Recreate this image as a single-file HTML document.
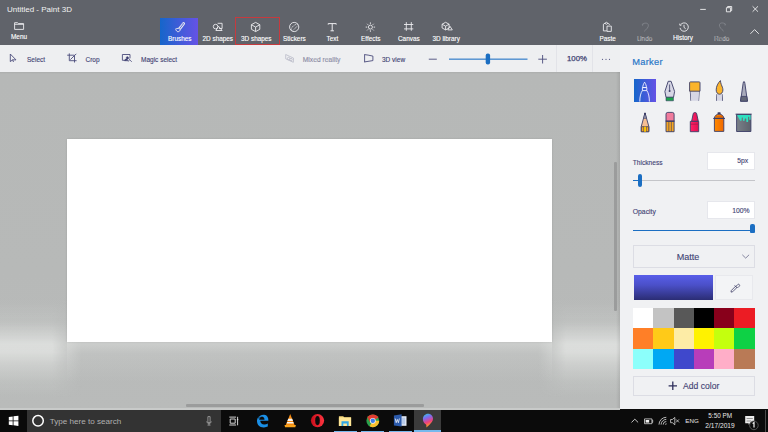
<!DOCTYPE html>
<html><head><meta charset="utf-8">
<style>
*{margin:0;padding:0;box-sizing:border-box}
html,body{width:768px;height:432px;overflow:hidden;background:#b8bab9;font-family:"Liberation Sans",sans-serif}
.a{position:absolute}
.t{position:absolute;white-space:nowrap;line-height:1}
#top{left:0;top:0;width:768px;height:45px;background:#60636a}
#bar{left:0;top:45px;width:620px;height:27px;background:#eeeff1}
#work{left:0;top:72px;width:620px;height:337px;background:linear-gradient(#b6b8b7 0px,#b7b9b8 200px,#b9bbba 337px)}
#band{left:0;top:298px;width:620px;height:100px;background:linear-gradient(rgba(222,224,222,0) 0px,rgba(222,224,222,.2) 24px,rgba(222,224,222,.65) 38px,rgba(222,224,222,.92) 46px,rgba(222,224,222,.9) 54px,rgba(222,224,222,.5) 68px,rgba(222,224,222,.18) 84px,rgba(222,224,222,0) 100px);-webkit-mask-image:linear-gradient(90deg,#000 0,#000 52px,transparent 82px,transparent 538px,#000 566px,#000 620px)}
#under{left:67px;top:342px;width:485px;height:40px;background:linear-gradient(rgba(222,224,222,.55),rgba(222,224,222,.2) 12px,rgba(222,224,222,0) 40px)}
#canvas{left:67px;top:139px;width:485px;height:203px;background:#fff;box-shadow:0 0 2px rgba(0,0,0,.12)}
#panel{left:620px;top:45px;width:148px;height:364px;background:#f0f1f3}
#task{left:0;top:409px;width:768px;height:23px;background:#0b0b0b}
.lbl{color:#fff;font-size:6.4px;-webkit-text-stroke:.12px #fff}
.dk{color:#424373;font-size:6.5px;-webkit-text-stroke:.12px #424373}
svg{position:absolute;overflow:visible}
</style></head><body>
<div id="top" class="a"></div>
<div class="t" style="left:7px;top:6px;font-size:8px;color:#f2f2f2">Untitled - Paint 3D</div>
<div class="t lbl" style="left:11px;top:34px">Menu</div>

<div class="a" style="left:160px;top:18px;width:38px;height:27px;background:linear-gradient(90deg,#1566ca,#3f5cd8 50%,#6552e6)"></div>
<div class="a" style="left:235px;top:17px;width:45px;height:28px;border:1px solid #c63a3e"></div>

<div class="t lbl" style="left:168px;top:36px">Brushes</div>
<div class="t lbl" style="left:202.5px;top:36px">2D shapes</div>
<div class="t lbl" style="left:241px;top:36px">3D shapes</div>
<div class="t lbl" style="left:283px;top:36px">Stickers</div>
<div class="t lbl" style="left:326.5px;top:36px">Text</div>
<div class="t lbl" style="left:361px;top:36px">Effects</div>
<div class="t lbl" style="left:398px;top:36px">Canvas</div>
<div class="t lbl" style="left:432.5px;top:36px">3D library</div>
<div class="t lbl" style="left:599.5px;top:36px">Paste</div>
<div class="t lbl" style="left:637px;top:36px;color:#7c7e83">Undo</div>
<div class="t lbl" style="left:673px;top:35.2px">History</div>
<div class="t lbl" style="left:714px;top:36px;color:#7c7e83">Redo</div>

<div id="bar" class="a"></div>
<div class="t dk" style="left:27px;top:56.6px">Select</div>
<div class="t dk" style="left:85.5px;top:56.6px">Crop</div>
<div class="t dk" style="left:141px;top:56.6px">Magic select</div>
<div class="t dk" style="left:302.8px;top:56.6px;font-size:6.7px;color:#a9aab8">Mixed reality</div>
<div class="t dk" style="left:382px;top:56.6px">3D view</div>
<div class="t dk" style="left:567px;top:55.3px;font-size:7.8px;-webkit-text-stroke:.25px #424373">100%</div>
<div class="a" style="left:556px;top:45px;width:1px;height:27px;background:#e2e3e8"></div>
<div class="a" style="left:592px;top:45px;width:1px;height:27px;background:#e2e3e8"></div>

<div id="work" class="a"></div>
<div id="band" class="a"></div>
<div id="under" class="a"></div>
<div id="canvas" class="a"></div>
<div class="a" style="left:0;top:72px;width:620px;height:2px;background:linear-gradient(rgba(0,0,0,.06),rgba(0,0,0,0))"></div>
<div class="a" style="left:616px;top:72px;width:4px;height:337px;background:linear-gradient(90deg,rgba(0,0,0,0),rgba(0,0,0,.09))"></div>
<div class="a" style="left:614px;top:162px;width:3px;height:149px;background:#9b9c9c;border-radius:1px"></div>
<div class="a" style="left:186px;top:404px;width:238px;height:3px;background:#9b9c9c;border-radius:1px"></div>

<div id="panel" class="a"></div>
<div class="t" style="left:632.2px;top:58px;font-size:9.3px;letter-spacing:.3px;color:#2b78c8;-webkit-text-stroke:.2px #2b78c8">Marker</div>
<div class="t dk" style="left:632.8px;top:159.6px;font-size:6.6px">Thickness</div>
<div class="t dk" style="left:632.8px;top:209.2px;font-size:6.8px">Opacity</div>

<div class="a" style="left:634px;top:79px;width:22px;height:23px;background:linear-gradient(90deg,#1566ca,#3f5cd8 50%,#6552e6)"></div>
<div class="a" style="left:706.8px;top:152px;width:48px;height:17.5px;background:#fff;border:1px solid #e6e7ec"></div>
<div class="t dk" style="left:737.3px;top:158px;font-size:6.8px">5px</div>
<div class="a" style="left:633px;top:180.2px;width:121.5px;height:1px;background:#c4c5c9"></div>
<div class="a" style="left:633px;top:180.2px;width:6px;height:1px;background:#1b6ec2"></div>
<div class="a" style="left:637.7px;top:174.2px;width:4.4px;height:13px;background:#1b6ec2;border-radius:2px"></div>
<div class="a" style="left:706.8px;top:201.4px;width:48px;height:17.8px;background:#fff;border:1px solid #e6e7ec"></div>
<div class="t dk" style="left:732.2px;top:207.5px;font-size:6.8px">100%</div>
<div class="a" style="left:633px;top:230px;width:121.5px;height:1px;background:#1b6ec2"></div>
<div class="a" style="left:749.5px;top:224px;width:5px;height:9px;background:#1b6ec2;border-radius:2px 2px 1px 1px"></div>
<div class="a" style="left:633px;top:245px;width:122px;height:23px;border:1px solid #dcdde4;background:#f0f1f3"></div>
<div class="t dk" style="left:676.8px;top:253px;font-size:9px">Matte</div>
<div class="a" style="left:634px;top:275.3px;width:79px;height:25px;background:linear-gradient(#585ee9,#4b50c9 40%,#2b2d74)"></div>
<div class="a" style="left:715.3px;top:275.3px;width:38px;height:25px;background:#f3f4f6;border:1px solid #e8e9ed"></div>
<div class="a" style="left:633px;top:308px;width:121.5px;height:61px;display:grid;grid-template-columns:repeat(6,1fr);grid-template-rows:repeat(3,1fr)">
<i style="background:#fff"></i><i style="background:#c3c3c3"></i><i style="background:#585858"></i><i style="background:#000"></i><i style="background:#88001b"></i><i style="background:#ec1c24"></i>
<i style="background:#ff7f27"></i><i style="background:#ffca18"></i><i style="background:#fdeca6"></i><i style="background:#fff200"></i><i style="background:#c4ff0e"></i><i style="background:#0ed145"></i>
<i style="background:#8cfffb"></i><i style="background:#00a8f3"></i><i style="background:#3f48cc"></i><i style="background:#b83dba"></i><i style="background:#ffaec8"></i><i style="background:#b97a56"></i>
</div>
<div class="a" style="left:633px;top:376px;width:121.5px;height:19.5px;border:1px solid #dcdde4;background:#f0f1f3"></div>
<div class="t dk" style="left:683px;top:381.5px;font-size:8.6px">Add color</div>

<svg width="768" height="432" viewBox="0 0 768 432" style="left:0;top:0">
<g fill="none" stroke="#ececef" stroke-width="0.9" stroke-linejoin="round">
<!-- menu folder -->
<path d="M14.6 22.7h3l.9.9h5.1v5.8h-9z M14.6 24.3h9"/>
<!-- brush -->
<path d="M178.7 28.3l4.3-5.4a.9 .9 0 0 1 1.4 1.1l-4.1 5.3" stroke-width="1.1"/>
<path d="M180.6 25.6l.7-.9M181.8 24.1l.7-.9" stroke="#5a5fd8" stroke-width=".6"/>
<path d="M175.6 28.8c.9 0 1.6 0 2.3-.5c1.1-.1 2.3.6 2.2 1.6c-.1 1-.9 1.7-1.9 1.8c-1 .1-1.6-.6-1.8-1.3c-.4 0-.8-.3-.8-.9" stroke-width="1"/>
<!-- 2D shapes -->
<circle cx="215.6" cy="26.6" r="2.3"/>
<path d="M217.6 23.3h4.5v5.2h-3"/>
<path d="M218.5 26.2l-2.6 4.3h6.2z"/>
<!-- cube -->
<path d="M255.6 22.4l4.2 2.3v4.6l-4.2 2.3l-4.2-2.3v-4.6z M251.4 24.7l4.2 2.4l4.2-2.4 M255.6 27.1v4.5"/>
<!-- stickers -->
<circle cx="294.2" cy="27" r="4.6"/>
<path d="M291 30.2c.5-3 2.5-5.5 6.8-6.2M292.5 30.8l5.5-5.3" stroke-dasharray="1 .8"/>
<!-- T -->
<path d="M328.2 24.6v-1h8v1M332.2 23.6v7.2M330.5 30.8h3.4" stroke-width="1"/>
<!-- sun -->
<circle cx="370.4" cy="27.1" r="2"/>
<path d="M370.4 22.4v1.5M370.4 30.3v1.5M365.7 27.1h1.5M373.6 27.1h1.5M367.1 23.8l1 1M372.7 29.4l1 1M373.7 23.8l-1 1M368.1 29.4l-1 1"/>
<!-- canvas -->
<path d="M404 24.5h9.3M404 28.9h9.3M406.3 22.1v8.7M411.3 22.1v8.7"/>
<!-- 3D library -->
<path d="M445.6 22.3l3.5 1.9v3.8l-3.5 1.9l-3.5-1.9v-3.8z M442.1 24.2l3.5 2l3.5-2 M445.6 26.2v3.7"/>
<path d="M450 26.3l2.3 3.6h-4.5z"/>
<!-- paste -->
<path d="M603.4 30.9v-6.7l3-1.9l3.4 2.3 M603.4 30.9h3.5 M604.9 23.3l1.5 1l1.5-1"/>
<path d="M607 26.1h4.3v5.3h-4.3z"/>
<!-- history -->
<path d="M680.6 24.8a4.2 4.2 0 1 1-.6 3.1M679.8 23.6v1.6h1.6M684 24.8v2.6l1.7 1.4"/>
</g>
<g fill="none" stroke="#80838a" stroke-width="0.9">
<path d="M642.4 24.3c1.9-1.7 5.8-1.7 6 .9c.2 2-2.2 4.4-4.2 6.1M642.3 24.3l.3 1.4M642.3 24.3l1.3-.3"/>
<path d="M725.4 24.1c-1.9-1.7-5.8-1.7-6 .9c-.2 2 2.2 4.4 4.2 6.1M725.4 24.1l-.3 1.4M725.4 24.1l-1.3-.3"/>
</g>
<g fill="none" stroke="#f0f0f2" stroke-width="0.9">
<path d="M700.2 9.4h5.6"/>
<path d="M726.4 7.7h4.2v4.1h-4.2z M727.6 7.7v-1.2h4.1v4.1h-1.1"/>
<path d="M752.6 6.3l5.4 5.4M758 6.3l-5.4 5.4"/>
<path d="M750.4 33.8l4.2-4.2l4.2 4.2"/>
</g>
</svg>

<svg width="768" height="432" viewBox="0 0 768 432" style="left:0;top:0">
<g fill="none" stroke="#4b4c7c" stroke-width="0.9" stroke-linejoin="round">
<!-- select cursor -->
<path d="M10.3 54v7.6l2.4-1.8l3.3.1z M12.6 59.8l.9 2.2"/>
<!-- crop -->
<path d="M67.2 55.2h7.3v7.3 M69.3 53.4v7.3h7.3 M70.4 59.6l3.6-3.6 M74.5 55.6l1.8-1.8" />
<!-- magic select -->
<path d="M122.4 54.5h7.6v3.8M122.4 54.5v5.8h3.7" />
<path d="M126.2 57.8a1.2 1.2 0 1 1 0 .1z M124.5 60.8c.3-1.4 1-1.8 1.8-1.8s1.5.6 1.7 1.8z" fill="#3a3b6e" stroke-width=".5"/>
<path d="M128.6 58.2l1.2 1.7l2 2M128.3 61.6l.9-1.6" stroke-width=".8"/>
<!-- 3D view -->
<path d="M364.6 54.3v8 M364.6 54.6l3.5.5l4.8 1v4.5l-8.3 1.3"/>
<!-- minus plus -->
<path d="M428.8 59.2h8 M538.3 59.2h8.6 M542.6 55v8.5"/>
</g>
<g fill="none" stroke="#b9bac8" stroke-width="0.8">
<path d="M285.7 54.5l7.8 3.6l-.2 4.2l-7.6-3.5z"/>
<circle cx="288.6" cy="58.5" r="1.2"/><circle cx="291" cy="59.5" r="1.2"/>
</g>
<rect x="449" y="58.6" width="78.5" height="1.1" fill="#2374c6"/>
<rect x="485.7" y="53.5" width="4.4" height="11" rx="2" fill="#1b6ec2"/>
<g fill="#4b4c7c"><circle cx="602.5" cy="59.3" r=".6"/><circle cx="606" cy="59.3" r=".6"/><circle cx="609.5" cy="59.3" r=".6"/></g>
<!-- matte chevron, eyedropper, plus -->
<path d="M742.3 254.8l3.4 3.3l3.4-3.3" fill="none" stroke="#6a6b8a" stroke-width=".8"/>
<path d="M731 292.1l.3-1.6l4.3-4.3l1.3 1.3l-4.3 4.3z M734.6 285.3l2.7 2.7 M736.2 286.1l1.5-1.5a1.1 1.1 0 0 1 1.6 1.6l-1.5 1.5" fill="none" stroke="#3d3e66" stroke-width=".8"/>
<path d="M668.6 385.8h8.4M672.8 381.6v8.4" fill="none" stroke="#2e2f5c" stroke-width="1.3"/>
</svg>

<svg width="768" height="432" viewBox="0 0 768 432" style="left:0;top:0">
<g stroke-linejoin="round">
<!-- selected marker (white) -->
<path d="M644.6 82.2c-1 1.4-1.9 3.8-1.9 5.3h3.8c0-1.5-.9-3.9-1.9-5.3z M642.4 87.6h4.4v3h-4.4z M642.4 90.6c-1.6 2-2.6 6-2.6 11 M646.8 90.6c1.6 2 2.6 6 2.6 11" fill="none" stroke="#f4f4ff" stroke-width=".9"/>
<!-- fountain pen -->
<path d="M668.2 81.3h2.9l3.5 10.2l-1.1 5.8h-7.5l-1.1-5.8z" fill="#d6d6e4" stroke="#3b3d66" stroke-width=".9"/>
<rect x="666" y="97.3" width="7.4" height="3.5" fill="#1aa34a" stroke="#3b3d66" stroke-width=".6"/>
<path d="M669.6 84.5v5.8" stroke="#3b3d66" stroke-width=".8"/>
<circle cx="669.6" cy="91" r="1" fill="#3b3d66"/>
<!-- flat brush -->
<path d="M690.3 91.2l.6 9.6M699.2 91.2l-.6 9.6" stroke="#3b3d66" stroke-width=".9" fill="none"/>
<path d="M690.6 91.2h8.4l-.5 9.6h-7.4z" fill="#d6d6e4"/>
<path d="M690.4 81.9h8.8a.8 .8 0 0 1 .8 .8v8.5h-10.4v-8.5a.8 .8 0 0 1 .8-.8z" fill="#fbb42c" stroke="#3b3d66" stroke-width=".9"/>
<!-- watercolor brush -->
<path d="M716.9 94.2l-.4 6.6M722.1 94.2l.4 6.6" stroke="#3b3d66" stroke-width=".9" fill="none"/>
<path d="M717.2 94.3h4.6l.4 6.5h-5.4z" fill="#d6d6e4"/>
<path d="M720.4 80.6c-2.5 2.5-4.2 5.8-4.2 9.3c0 2.5 1.4 4.3 3.3 4.3s3.4-1.8 3.4-4.3c0-2-.9-3.5-1.6-5.3c-.3-1.2-.9-2.6-.9-4z" fill="#fbb42c" stroke="#3b3d66" stroke-width=".9"/>
<!-- gray marker -->
<path d="M743.5 81.8h1l.4 1.6l2.5 17.8h-6.8l2.5-17.8z" fill="#a9abbb" stroke="#3b3d66" stroke-width=".9"/>
<path d="M741.1 96.4h5.8l.6 4.8h-7z" fill="#646878" stroke="#3b3d66" stroke-width=".8"/>
</g>
</svg>

<svg width="768" height="432" viewBox="0 0 768 432" style="left:0;top:0">
<defs>
<linearGradient id="gcan" x1="0" x2="1"><stop offset="0" stop-color="#ff8a00"/><stop offset="1" stop-color="#f06800"/></linearGradient>
<linearGradient id="gbk" x1="0" x2="1"><stop offset="0" stop-color="#7a8089"/><stop offset="1" stop-color="#5d626c"/></linearGradient>
<linearGradient id="gcr" x1="0" x2="1"><stop offset="0" stop-color="#ff2068"/><stop offset="1" stop-color="#e0104f"/></linearGradient>
</defs>
<g stroke="#3b3d66" stroke-linejoin="round">
<!-- pencil -->
<path d="M645 112.9l-3.8 13.8v5h7.7v-5z" fill="#f6bf94" stroke-width=".9"/>
<path d="M645 112.9l-1.3 5.4h2.6z" fill="#b4b6c8" stroke-width=".7"/>
<path d="M644.2 113.2l.8-.4l.8.4l.2 1.6h-2z" fill="#3b3d66" stroke="none"/>
<path d="M641.4 126.7h7.3v5h-7.3z" fill="#f5a623" stroke-width=".8"/>
<path d="M644 126.7h2.2v5h-2.2z" fill="#ffc800" stroke="none"/>
<path d="M643.6 126.7v5M646.5 126.7v5" stroke-width=".5"/>
<!-- eraser -->
<path d="M666 121.1v-6.9a1.8 1.8 0 0 1 1.8-1.8h4.5a1.8 1.8 0 0 1 1.8 1.8v6.9z" fill="#f07b9c" stroke-width=".9"/>
<path d="M666 121.4h8.1v10.3h-8.1z" fill="#f5a623" stroke-width=".9"/>
<path d="M665.3 121.2h9.5" stroke-width=".9"/>
<path d="M668.8 121.6v10M671.4 121.6v10" stroke-width=".6"/>
<!-- crayon -->
<path d="M691.6 121.3l1.6-7.5a1.5 1.5 0 0 1 1.5-1.2h.5a1.5 1.5 0 0 1 1.5 1.2l1.6 7.5z" fill="url(#gcr)" stroke-width=".9"/>
<path d="M690.3 121.4h8.4v10.3h-8.4z" fill="url(#gcr)" stroke-width=".9"/>
<path d="M690.5 124.2h8" stroke-width=".8" stroke="#a61a4e"/>
<!-- spray can -->
<rect x="717.5" y="112.3" width="3.2" height="1.9" rx=".8" fill="#3b3d66" stroke="none"/>
<path d="M714.4 118.4c0-2.6 2.1-4.2 4.7-4.2s4.7 1.6 4.7 4.2z" fill="url(#gcan)" stroke-width=".9"/>
<path d="M714.4 118.4h9.4v13h-9.4z" fill="url(#gcan)" stroke-width=".9"/>
<path d="M713.2 118.4h11.8" stroke-width="1"/>
<path d="M715.5 116.5h7.2" stroke="#d05a00" stroke-width=".6"/>
<!-- bucket -->
<path d="M736.6 114.7h14.3v16.8h-14.3z" fill="url(#gbk)" stroke-width=".9"/>
<path d="M737 114.9h13.6v4.6c-.3 .6-1.2 .6-1.4 0v-2.3c-.3-.5-.8-.5-1 0v4.3c-.3 .8-1.6 .8-1.9 0v-2.6c-.4-.6-1.3-.6-1.6 0v1.6c-.3 .6-1.5 .6-1.8 0v-2.6c-.3-.5-.9-.5-1.2 0v2.3c-.2 .7-1.6 .7-1.8 0z" fill="#2ee0c0" stroke="none"/>
<path d="M735.6 114.2h16.1" stroke-width="1.1"/>
</g>
</svg>

<div id="task" class="a"></div>

<div class="a" style="left:0;top:408px;width:620px;height:1.5px;background:#c8cac9"></div>
<div class="a" style="left:0;top:409.5px;width:27px;height:22.5px;background:#0a0a0a"></div>
<div class="a" style="left:27px;top:409.5px;width:193.5px;height:22.5px;background:#333333"></div>
<div class="a" style="left:414px;top:409.5px;width:27px;height:22.5px;background:#3b3b3b"></div>
<div class="a" style="left:333.6px;top:430.6px;width:23px;height:1.4px;background:#76b9ed"></div>
<div class="a" style="left:361.3px;top:430.6px;width:22.7px;height:1.4px;background:#76b9ed"></div>
<div class="a" style="left:388.6px;top:430.6px;width:23px;height:1.4px;background:#76b9ed"></div>
<div class="a" style="left:414px;top:430.4px;width:27px;height:1.6px;background:#76b9ed"></div>
<div class="t" style="left:49.7px;top:417.9px;font-size:8.1px;color:#b0b0b0">Type here to search</div>
<div class="t" style="left:685.3px;top:418px;font-size:6.2px;color:#e8e8e8">ENG</div>
<div class="t" style="left:708.3px;top:413.2px;font-size:6.4px;color:#e8e8e8">5:50 PM</div>
<div class="t" style="left:705.3px;top:422.5px;font-size:6.6px;color:#e8e8e8">2/17/2019</div>
<div class="a" style="left:765px;top:409.5px;width:1px;height:22.5px;background:#4a4a4a"></div>
<svg width="768" height="432" viewBox="0 0 768 432" style="left:0;top:0">
<defs>
<linearGradient id="gp3" x1="0" y1="0" x2=".3" y2="1"><stop offset="0" stop-color="#28d8e0"/><stop offset=".35" stop-color="#7c6cf0"/><stop offset=".7" stop-color="#f0407a"/><stop offset="1" stop-color="#ffa020"/></linearGradient>
<linearGradient id="gop" x1="0" x2="1"><stop offset="0" stop-color="#c80d1a"/><stop offset="1" stop-color="#ff3540"/></linearGradient>
</defs>
<!-- windows logo -->
<path d="M8.8 416.9l3.9-.5v4h-3.9z M13.5 416.3l4.9-.6v4.7h-4.9z M8.8 421.2h3.9v4l-3.9-.5z M13.5 421.2h4.9v4.7l-4.9-.6z" fill="#fff"/>
<circle cx="38.05" cy="420.85" r="5.25" fill="none" stroke="#fff" stroke-width="1.5"/>
<!-- mic -->
<path d="M207.9 416.6h2.2v5a1.1 1.1 0 0 1-2.2 0z M206.8 421.3a2.2 2.2 0 0 0 4.4 0 M209 423.5v1.5M207.5 425.1h3" fill="none" stroke="#a8a8a8" stroke-width=".8"/>
<!-- task view -->
<path d="M229.3 417.1h6.8 M229.3 425h6.8 M230.2 419h5v4.2h-5z M237.6 416.8v8.5 M236.9 419.6h1.4" fill="none" stroke="#e8e8e8" stroke-width=".9"/>
<!-- edge -->
<path d="M257.5 418.6c1.4-2.6 4-4.2 6.8-3.9c2.8.3 4.3 2.7 4.1 6.1h-8.2c.2 2.5 2 3.7 4.2 3.6c1.3 0 2.5-.4 3.4-1v3.2c-1.2.6-2.8 .9-4.4 .8c-3.6-.1-6.1-2.3-6.4-5.9c-.2-2 .6-3.9 1.8-5.1c-.6 1.2-.6 2.2-.5 2.4c.7-1.6 2.4-2.6 4.4-2.6c-2.2.2-3.5 1.8-3.5 3.5h5.3c0-1.8-1-3.3-3-3.3c-2.1 0-3.8 1.2-4.4 2.6z" fill="#1a8fe6"/>
<!-- vlc -->
<path d="M290.2 413.9l-4.6 11.6h9.2z" fill="#f58a10"/>
<path d="M288.2 418.8h4l.8 2.2h-5.6z M287.1 421.9h6.2l.5 1.5h-7.2z" fill="#f4f4f4"/>
<path d="M284.5 425.1h11.4l-.6 2.2h-10.2z" fill="#f9a31b"/>
<!-- opera -->
<ellipse cx="317.5" cy="420.6" rx="6.6" ry="6.6" fill="url(#gop)"/>
<ellipse cx="317.5" cy="420.6" rx="2.3" ry="4.6" fill="#0a0a0a"/>
<!-- explorer -->
<path d="M338.9 416.3h4.3l1 .9h6.9v8.8h-12.2z" fill="#f5d67a"/>
<path d="M338.9 417.6h12.2v8.4h-12.2z" fill="#fde596"/>
<path d="M341.5 421.2h7.2v4.8h-1.8v-2.4h-3.6v2.4h-1.8z" fill="#2fa6e6"/>
<!-- chrome -->
<circle cx="372.8" cy="420.8" r="6.4" fill="#2ba24c"/>
<path d="M372.8 420.8l-5.5-3.2a6.4 6.4 0 0 1 11.1 0z" fill="#e03c31"/>
<path d="M372.8 420.8h6.4a6.4 6.4 0 0 1-9.6 5.5z" fill="#fbc02d"/>
<path d="M367.3 417.6l2.8 4.7l2.7-1.5z" fill="#e03c31"/>
<circle cx="372.8" cy="420.8" r="2.9" fill="#f5f5f5"/>
<circle cx="372.8" cy="420.8" r="2.2" fill="#3d7ee8"/>
<!-- word -->
<path d="M400.6 416.2h5.9v9.6h-5.9z" fill="#e6ecf6"/>
<path d="M401.8 417.6h3.4v6.8h-3.4z" fill="#b9cbe9"/>
<path d="M393.9 415.4l7.7-1.2v12.4l-7.7-1.2z" fill="#2b5aab"/>
<path d="M395.2 418.5l1 4.2l1.1-3.3l1.1 3.3l1-4.2" fill="none" stroke="#f0f3fa" stroke-width=".8"/>
<!-- paint 3d -->
<path d="M428 413.7c2.9 0 5 2.2 5 5c0 2.6-1.9 4.3-3.3 5.7c-1 1-2 1.9-3.5 3.1c.4-1.2.3-2.1-.2-3c-1.9-1.1-3.1-3.3-3.1-5.6c0-2.8 2.3-5.2 5.1-5.2z" fill="url(#gp3)"/>
<!-- tray -->
<path d="M631.5 422.4l3.3-3.2l3.3 3.2" fill="none" stroke="#d8d8d8" stroke-width=".9"/>
<path d="M644.5 418.9h7.4v4.8h-7.4z M652 420.2h.7v2.2h-.7" fill="none" stroke="#d8d8d8" stroke-width=".8"/>
<rect x="645.6" y="420" width="3.6" height="2.6" fill="#f0f0f0"/>
<path d="M659 424.6a7.3 7.3 0 0 1 7.3-7.3M661.1 424.6a5.2 5.2 0 0 1 5.2-5.2M663.2 424.6a3.1 3.1 0 0 1 3.1-3.1" fill="none" stroke="#c8c8c8" stroke-width=".9"/>
<path d="M664.8 424.6h1.6v-1.6z" fill="#e8e8e8"/>
<path d="M670.6 419.5h1.8l2.4-2.1v7.4l-2.4-2.1h-1.8z M676 419.4l3 3M679 419.4l-3 3" fill="none" stroke="#d8d8d8" stroke-width=".8"/>
<path d="M745.2 416h9v7.2h-4l-1.6 1.6v-1.6h-3.4z" fill="#ececec"/>
<path d="M746.6 418.5h6.2M746.6 421h4.5" stroke="#8a8a8a" stroke-width=".9"/>
<circle cx="753.9" cy="425.4" r="4.3" fill="#0c0c0c" stroke="#5c5c5c" stroke-width=".9"/>
<path d="M752.6 423.4l1.4-.8v5" fill="none" stroke="#f4f4f4" stroke-width="1.2"/>
</svg>
</body></html>
